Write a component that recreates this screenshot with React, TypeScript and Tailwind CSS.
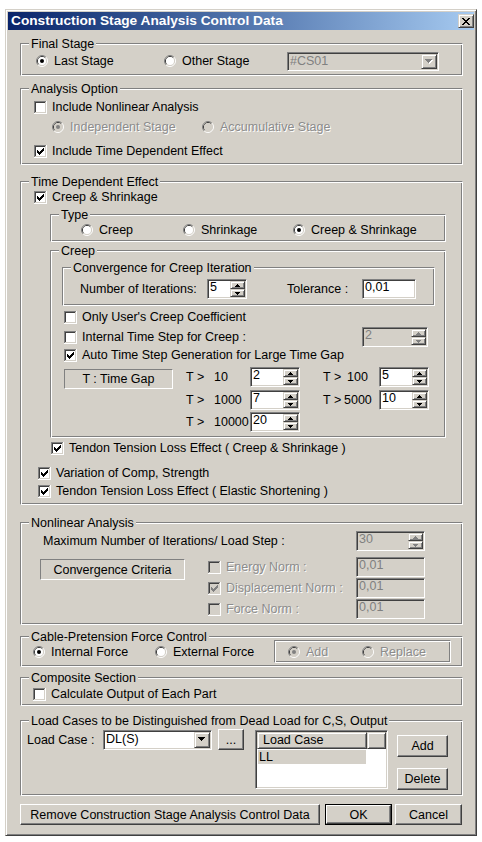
import React from "react";

const SUNKEN =
  "border border-t-[#808080] border-l-[#808080] border-b-white border-r-white shadow-[inset_1px_1px_0_#404040,inset_-1px_-1px_0_#d4d0c8]";
const RAISED =
  "border border-t-[#d4d0c8] border-l-[#d4d0c8] border-b-[#404040] border-r-[#404040] shadow-[inset_1px_1px_0_#fff,inset_-1px_-1px_0_#808080]";
const BUTTON =
  "border border-t-white border-l-white border-b-[#404040] border-r-[#404040] shadow-[inset_-1px_-1px_0_#808080] bg-[#d4d0c8]";
const ETCHED =
  "border border-t-[#808080] border-l-[#808080] border-b-white border-r-white shadow-[inset_1px_1px_0_#fff,inset_-1px_-1px_0_#808080]";
const STATIC = "border border-t-[#808080] border-l-[#808080] border-b-white border-r-white";
const DIS = "text-[#8c8c8c] [text-shadow:1px_1px_0_#fff]";

function CheckBox({ checked, disabled }: { checked?: boolean; disabled?: boolean }) {
  const c = disabled ? "#808080" : "#000";
  return (
    <svg width="13" height="13" viewBox="0 0 13 13" className="shrink-0" shapeRendering="crispEdges">
      <rect x="0" y="0" width="13" height="13" fill="#fff" />
      <path d="M0 0H12V1H1V12H0Z" fill="#808080" />
      <path d="M1 1H11V2H2V11H1Z" fill="#404040" />
      <path d="M11 1H12V12H1V11H11Z" fill="#d4d0c8" />
      <rect x="2" y="2" width="9" height="9" fill={disabled ? "#d4d0c8" : "#fff"} />
      {checked && (
        <path
          d="M3 5h1v3h-1zM4 6h1v3h-1zM5 7h1v3h-1zM6 6h1v3h-1zM7 5h1v3h-1zM8 4h1v3h-1zM9 3h1v3h-1z"
          fill={c}
        />
      )}
    </svg>
  );
}

function Radio({ checked, disabled }: { checked?: boolean; disabled?: boolean }) {
  return (
    <svg width="12" height="12" viewBox="0 0 12 12" className="shrink-0">
      <path d="M2.11 9.89A5.5 5.5 0 0 1 9.89 2.11" fill="none" stroke="#808080" />
      <path d="M9.89 2.11A5.5 5.5 0 0 1 2.11 9.89" fill="none" stroke="#fff" />
      <path d="M2.82 9.18A4.5 4.5 0 0 1 9.18 2.82" fill="none" stroke="#404040" />
      <path d="M9.18 2.82A4.5 4.5 0 0 1 2.82 9.18" fill="none" stroke="#d4d0c8" />
      <circle cx="6" cy="6" r="4" fill={disabled ? "#d4d0c8" : "#fff"} />
      {checked && <circle cx="6" cy="6" r="2" fill={disabled ? "#808080" : "#000"} />}
    </svg>
  );
}

function CheckItem({
  label,
  checked,
  disabled,
  className = "",
}: {
  label: string;
  checked?: boolean;
  disabled?: boolean;
  className?: string;
}) {
  return (
    <div className={`flex items-center ${className}`}>
      <CheckBox checked={checked} disabled={disabled} />
      <span className={`ml-[5px] whitespace-nowrap ${disabled ? DIS : ""}`}>{label}</span>
    </div>
  );
}

function RadioItem({
  label,
  checked,
  disabled,
  className = "",
}: {
  label: string;
  checked?: boolean;
  disabled?: boolean;
  className?: string;
}) {
  return (
    <div className={`flex items-center ${className}`}>
      <Radio checked={checked} disabled={disabled} />
      <span className={`ml-[6px] whitespace-nowrap ${disabled ? DIS : ""}`}>{label}</span>
    </div>
  );
}

function Group({
  label,
  className = "",
  children,
}: {
  label?: string;
  className?: string;
  children?: React.ReactNode;
}) {
  return (
    <div className={`relative shrink-0 ${ETCHED} ${className}`}>
      {label && (
        <span className="absolute left-[8px] -top-[7px] px-[2px] bg-[#d4d0c8] leading-[14px] whitespace-nowrap">
          {label}
        </span>
      )}
      {children}
    </div>
  );
}

function Arrow({ dir, disabled, small }: { dir: "up" | "down"; disabled?: boolean; small?: boolean }) {
  const fill = disabled ? "#808080" : "#000";
  if (small) {
    return (
      <svg width="5" height="3" viewBox="0 0 5 3" shapeRendering="crispEdges">
        {dir === "up" ? (
          <path d="M2 0h1v1h1v1h1v1H0V2h1V1h1z" fill={fill} />
        ) : (
          <path d="M0 0h5v1H4v1H3v1H2V2H1V1H0z" fill={fill} />
        )}
      </svg>
    );
  }
  return (
    <svg width="8" height="5" viewBox="0 0 8 5" shapeRendering="crispEdges">
      {disabled && <path d="M1 1h7v1H7v1H6v1H5v1H4V4H3V3H2V2H1z" fill="#fff" />}
      <path d="M0 0h7v1H6v1H5v1H4v1H3V3H2V2H1V1H0z" fill={fill} />
    </svg>
  );
}

function Spin({
  value,
  disabled,
  className = "",
}: {
  value: string;
  disabled?: boolean;
  className?: string;
}) {
  return (
    <div className={`${SUNKEN} p-[1px] flex h-[20px] shrink-0 ${disabled ? "bg-[#d4d0c8]" : "bg-white"} ${className}`}>
      <span className={`flex-1 pl-[1px] leading-[12px] ${disabled ? "text-[#808080]" : ""}`}>{value}</span>
      <div className="w-[15px] flex flex-col">
        <div className={`flex-1 ${RAISED} bg-[#d4d0c8] flex items-center justify-center`}>
          <Arrow dir="up" small disabled={disabled} />
        </div>
        <div className={`flex-1 ${RAISED} bg-[#d4d0c8] flex items-center justify-center`}>
          <Arrow dir="down" small disabled={disabled} />
        </div>
      </div>
    </div>
  );
}

function Edit({
  value,
  disabled,
  className = "",
}: {
  value: string;
  disabled?: boolean;
  className?: string;
}) {
  return (
    <div className={`${SUNKEN} p-[1px] h-[20px] shrink-0 ${disabled ? "bg-[#d4d0c8]" : "bg-white"} ${className}`}>
      <span className={`block pl-[1px] leading-[12px] ${disabled ? "text-[#808080]" : ""}`}>{value}</span>
    </div>
  );
}

function Combo({
  value,
  disabled,
  className = "",
}: {
  value: string;
  disabled?: boolean;
  className?: string;
}) {
  return (
    <div className={`${SUNKEN} p-[1px] flex shrink-0 ${disabled ? "bg-[#d4d0c8]" : "bg-white"} ${className}`}>
      <span className={`flex-1 pl-[1px] leading-[14px] ${disabled ? "text-[#808080]" : ""}`}>{value}</span>
      <div className={`w-[16px] ${RAISED} bg-[#d4d0c8] flex items-center justify-center`}>
        <Arrow dir="down" disabled={disabled} />
      </div>
    </div>
  );
}

function Btn({ children, className = "" }: { children: React.ReactNode; className?: string }) {
  return (
    <div className={`${BUTTON} flex items-center justify-center shrink-0 whitespace-nowrap ${className}`}>
      {children}
    </div>
  );
}

function TRow({
  first,
  n1,
  v1,
  n2,
  v2,
  t2w = "w-[24px]",
  n2w = "w-[32px]",
  className = "",
}: {
  first?: boolean;
  n1: string;
  v1: string;
  n2?: string;
  v2?: string;
  t2w?: string;
  n2w?: string;
  className?: string;
}) {
  return (
    <div className={`flex items-center h-[20px] ml-[2px] ${className}`}>
      {first ? (
        <div className={`${STATIC} w-[109px] h-[20px] mt-[3px] flex items-center justify-center`}>T : Time Gap</div>
      ) : (
        <div className="w-[109px]" />
      )}
      <span className="ml-[13px] w-[28px] whitespace-nowrap">T &gt;</span>
      <span className="w-[36px]">{n1}</span>
      <Spin value={v1} className="w-[50px]" />
      {n2 && (
        <>
          <span className={`ml-[23px] whitespace-nowrap ${t2w}`}>T &gt;</span>
          <span className={n2w}>{n2}</span>
          <Spin value={v2 || ""} className="w-[50px]" />
        </>
      )}
    </div>
  );
}

export default function App() {
  return (
    <div className="min-h-[842px] bg-white pt-[9px] pl-[5px] font-['Liberation_Sans',Arial,sans-serif] text-[12.5px] leading-[14px] text-black">
      <div className="w-[472px] h-[827px] bg-[#d4d0c8] border border-t-[#d4d0c8] border-l-[#d4d0c8] border-b-[#404040] border-r-[#404040] shadow-[inset_1px_1px_0_#fff,inset_-1px_-1px_0_#808080] p-[2px] flex flex-col">
        {/* Title bar */}
        <div className="h-[18px] shrink-0 bg-linear-to-r from-[#0a246a] to-[#a6caf0] flex items-center pl-[3px]">
          <span className="text-white font-bold text-[13.7px] leading-[16px] whitespace-nowrap">
            Construction Stage Analysis Control Data
          </span>
          <div className={`ml-auto w-[16px] h-[14px] ${RAISED} bg-[#d4d0c8] flex items-center justify-center`}>
            <svg width="8" height="7" viewBox="0 0 8 7" shapeRendering="crispEdges">
              <path
                d="M0 0h2v1h1v1h2V1h1V0h2v1H7v1H6v1H5v1h1v1h1v1h1v1H6V6H5V5H3v1H2v1H0V6h1V5h1V4h1V3H2V2H1V1H0z"
                fill="#000"
              />
            </svg>
          </div>
        </div>

        <div className="flex flex-col pl-[12px]">
          {/* Final Stage */}
          <Group label="Final Stage" className="mt-[13px] w-[443px] h-[33px]">
            <div className="flex items-center h-[20px] mt-[7px] ml-[15px]">
              <RadioItem label="Last Stage" checked className="w-[128px]" />
              <RadioItem label="Other Stage" className="w-[123px]" />
              <Combo value="#CS01" disabled className="w-[152px] h-[19px]" />
            </div>
          </Group>

          {/* Analysis Option */}
          <Group label="Analysis Option" className="mt-[12px] w-[443px] h-[77px]">
            <CheckItem label="Include Nonlinear Analysis" className="mt-[8px] ml-[13px] h-[20px]" />
            <div className="flex items-center h-[20px] ml-[31px]">
              <RadioItem label="Independent Stage" checked disabled className="w-[150px]" />
              <RadioItem label="Accumulative Stage" disabled />
            </div>
            <CheckItem label="Include Time Dependent Effect" checked className="mt-[4px] ml-[13px] h-[20px]" />
          </Group>

          {/* Time Dependent Effect */}
          <Group label="Time Dependent Effect" className="mt-[16px] w-[443px] h-[324px]">
            <CheckItem label="Creep & Shrinkage" checked className="mt-[7px] ml-[13px] h-[16px]" />
            <Group label="Type" className="mt-[9px] ml-[29px] w-[396px] h-[28px]">
              <div className="flex items-center h-[16px] mt-[7px] ml-[30px]">
                <RadioItem label="Creep" className="w-[102px]" />
                <RadioItem label="Shrinkage" className="w-[110px]" />
                <RadioItem label="Creep & Shrinkage" checked />
              </div>
            </Group>
            <Group label="Creep" className="mt-[8px] ml-[29px] w-[396px] h-[188px]">
              <div className="flex flex-col pl-[11px]">
                <Group label="Convergence for Creep Iteration" className="mt-[16px] w-[373px] h-[39px]">
                  <div className="flex items-center h-[20px] mt-[11px] ml-[17px]">
                    <span className="w-[127px] whitespace-nowrap">Number of Iterations:</span>
                    <Spin value="5" className="w-[40px]" />
                    <span className="ml-[40px] w-[75px] whitespace-nowrap">Tolerance :</span>
                    <Edit value="0,01" className="w-[54px]" />
                  </div>
                </Group>
                <CheckItem label="Only User's Creep Coefficient" className="mt-[3px] ml-[2px] h-[16px]" />
                <div className="flex items-center mt-[2px] ml-[2px] h-[20px]">
                  <CheckItem label="Internal Time Step for Creep :" className="w-[298px]" />
                  <Spin value="2" disabled className="w-[66px]" />
                </div>
                <CheckItem label="Auto Time Step Generation for Large Time Gap" checked className="ml-[2px] h-[16px]" />
                <TRow first n1="10" v1="2" n2="100" v2="5" className="mt-[4px]" />
                <TRow n1="1000" v1="7" n2="5000" v2="10" t2w="w-[21px]" n2w="w-[35px]" className="mt-[3px]" />
                <TRow n1="10000" v1="20" className="mt-[2px]" />
              </div>
            </Group>
            <CheckItem
              label="Tendon Tension Loss Effect ( Creep & Shrinkage )"
              checked
              className="mt-[2px] ml-[30px] h-[16px]"
            />
            <CheckItem label="Variation of Comp, Strength" checked className="mt-[9px] ml-[17px] h-[16px]" />
            <CheckItem
              label="Tendon Tension Loss Effect ( Elastic Shortening )"
              checked
              className="mt-[2px] ml-[17px] h-[16px]"
            />
          </Group>

          {/* Nonlinear Analysis */}
          <Group label="Nonlinear Analysis" className="mt-[17px] w-[443px] h-[103px]">
            <div className="flex items-center h-[20px] mt-[8px] ml-[22px]">
              <span className="w-[313px] whitespace-nowrap">Maximum Number of Iterations/ Load Step :</span>
              <Spin value="30" disabled className="w-[69px]" />
            </div>
            <div className="flex items-start mt-[6px]">
              <div className={`${STATIC} ml-[19px] mt-[2px] w-[145px] h-[21px] flex items-center justify-center`}>
                Convergence Criteria
              </div>
              <div className="ml-[23px] flex flex-col gap-[1px]">
                <div className="flex items-center h-[20px]">
                  <CheckItem label="Energy Norm :" disabled className="w-[148px]" />
                  <Edit value="0,01" disabled className="w-[69px]" />
                </div>
                <div className="flex items-center h-[20px]">
                  <CheckItem label="Displacement Norm :" checked disabled className="w-[148px]" />
                  <Edit value="0,01" disabled className="w-[69px]" />
                </div>
                <div className="flex items-center h-[20px]">
                  <CheckItem label="Force Norm :" disabled className="w-[148px]" />
                  <Edit value="0,01" disabled className="w-[69px]" />
                </div>
              </div>
            </div>
          </Group>

          {/* Cable-Pretension Force Control */}
          <Group label="Cable-Pretension Force Control" className="mt-[11px] w-[443px] h-[31px]">
            <div className="flex items-center h-[23px] mt-[3px] ml-[12px]">
              <RadioItem label="Internal Force" checked className="w-[122px]" />
              <RadioItem label="External Force" className="w-[119px]" />
              <Group className="w-[177px] h-[23px] flex items-center pl-[13px]">
                <RadioItem label="Add" checked disabled className="w-[74px]" />
                <RadioItem label="Replace" disabled />
              </Group>
            </div>
          </Group>

          {/* Composite Section */}
          <Group label="Composite Section" className="mt-[10px] w-[443px] h-[29px]">
            <CheckItem label="Calculate Output of Each Part" className="mt-[8px] ml-[12px] h-[16px]" />
          </Group>

          {/* Load Cases */}
          <Group
            label="Load Cases to be Distinguished from Dead Load for C,S, Output"
            className="mt-[14px] w-[443px] h-[76px]"
          >
            <div className="flex items-start mt-[8px] ml-[6px]">
              <div className="flex items-center h-[21px]">
                <span className="w-[76px] whitespace-nowrap">Load Case :</span>
                <Combo value="DL(S)" className="w-[109px] h-[20px]" />
                <Btn className="ml-[6px] w-[26px] h-[21px]">...</Btn>
              </div>
              <div className={`${SUNKEN} p-[1px] ml-[11px] mt-[1px] w-[133px] h-[59px] bg-white flex flex-col`}>
                <div className="flex h-[17px] shrink-0">
                  <div className={`${RAISED} bg-[#d4d0c8] w-[110px] pl-[5px] leading-[15px] whitespace-nowrap`}>
                    Load Case
                  </div>
                  <div className={`${RAISED} bg-[#d4d0c8] flex-1`} />
                </div>
                <div className="ml-[1px] mt-[1px] w-[108px] h-[14px] bg-[#d4d0c8] pl-[1px] leading-[14px]">LL</div>
              </div>
              <div className="ml-[9px] mt-[6px] flex flex-col">
                <Btn className="w-[51px] h-[22px]">Add</Btn>
                <Btn className="mt-[11px] w-[51px] h-[22px]">Delete</Btn>
              </div>
            </div>
          </Group>

          {/* Bottom buttons */}
          <div className="flex mt-[8px] h-[21px]">
            <Btn className="w-[300px] h-[21px]">Remove Construction Stage Analysis Control Data</Btn>
            <div className="ml-[5px] w-[67px] h-[21px] border border-black">
              <div className="w-full h-full border border-t-white border-l-white border-b-[#404040] border-r-[#404040] shadow-[inset_-1px_-1px_0_#808080] flex items-center justify-center">
                OK
              </div>
            </div>
            <Btn className="ml-[3px] w-[67px] h-[21px]">Cancel</Btn>
          </div>
        </div>
      </div>
    </div>
  );
}
